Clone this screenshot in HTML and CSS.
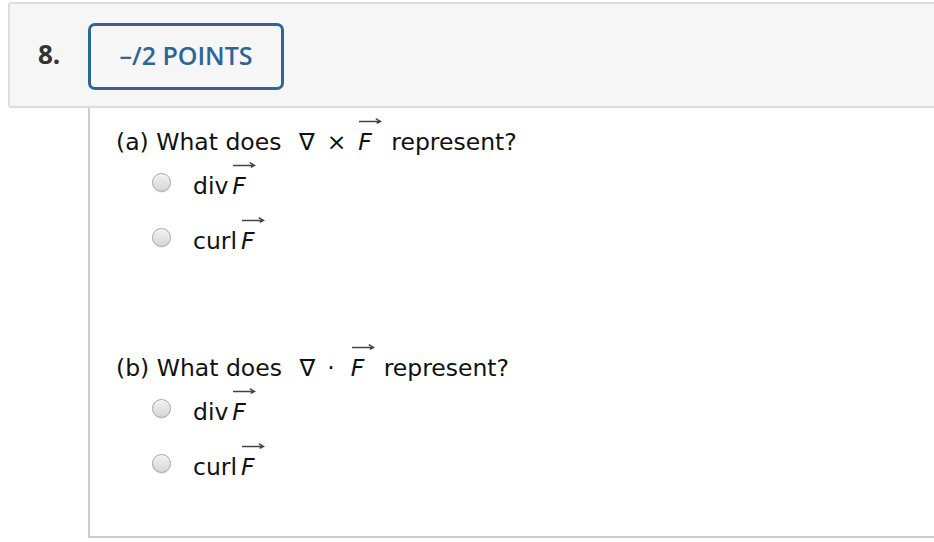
FILE: index.html
```html
<!DOCTYPE html>
<html lang="en">
<head>
<meta charset="utf-8">
<title>Question 8</title>
<link rel="stylesheet" href="styles.css">
</head>
<body>
<section class="question">
  <header class="qhead">
    <span class="qnum">8.</span>
    <span class="points">–/2 POINTS</span>
  </header>
  <div class="qbody">
    <div class="part">
      <p class="prompt">(a) What does <span class="math"><span class="op">∇</span><span class="op">×</span><span class="vec">F<svg class="arrow" viewBox="0 0 24 8" aria-hidden="true"><path d="M0 4.5H22.5M17.5 1.5L22.5 4.5L18.5 6.5"/></svg></span></span> represent?</p>
      <ul class="choices">
        <li class="choice"><span class="radio"></span><span class="label">div<span class="vec">F<svg class="arrow" viewBox="0 0 24 8" aria-hidden="true"><path d="M0 4.5H22.5M17.5 1.5L22.5 4.5L18.5 6.5"/></svg></span></span></li>
        <li class="choice"><span class="radio"></span><span class="label">curl<span class="vec">F<svg class="arrow" viewBox="0 0 24 8" aria-hidden="true"><path d="M0 4.5H22.5M17.5 1.5L22.5 4.5L18.5 6.5"/></svg></span></span></li>
      </ul>
    </div>
    <div class="part part-b">
      <p class="prompt">(b) What does <span class="math"><span class="op">∇</span><span class="op dot">·</span><span class="vec">F<svg class="arrow" viewBox="0 0 24 8" aria-hidden="true"><path d="M0 4.5H22.5M17.5 1.5L22.5 4.5L18.5 6.5"/></svg></span></span> represent?</p>
      <ul class="choices">
        <li class="choice"><span class="radio"></span><span class="label">div<span class="vec">F<svg class="arrow" viewBox="0 0 24 8" aria-hidden="true"><path d="M0 4.5H22.5M17.5 1.5L22.5 4.5L18.5 6.5"/></svg></span></span></li>
        <li class="choice"><span class="radio"></span><span class="label">curl<span class="vec">F<svg class="arrow" viewBox="0 0 24 8" aria-hidden="true"><path d="M0 4.5H22.5M17.5 1.5L22.5 4.5L18.5 6.5"/></svg></span></span></li>
      </ul>
    </div>
  </div>
</section>
</body>
</html>
```

FILE: styles.css
```css
html, body {
  margin: 0;
  padding: 0;
  background: #ffffff;
  overflow: hidden;
}

body {
  width: 934px;
  height: 542px;
}

.question {
  padding-top: 2px;
  margin-right: -40px;
}

.qhead {
  display: flex;
  align-items: flex-start;
  margin-left: 8px;
  padding: 19px 0 16px 28px;
  background: #f6f6f6;
  border: 2px solid #dcdcdc;
  border-radius: 3px;
}

.qnum {
  width: 50px;
  margin-top: 16px;
  font-family: "Open Sans", "Liberation Sans", sans-serif;
  font-weight: 700;
  font-size: 26px;
  line-height: 30px;
  color: #333333;
}

.points {
  box-sizing: border-box;
  width: 196px;
  height: 67px;
  padding-bottom: 4px;
  display: flex;
  align-items: center;
  justify-content: center;
  border: 3px solid #2d6596;
  border-radius: 7px;
  font-family: "Open Sans", "Liberation Sans", sans-serif;
  font-weight: 600;
  font-size: 25px;
  color: #2d6596;
}

.qbody {
  box-sizing: border-box;
  margin-left: 88px;
  height: 430px;
  border-left: 2px solid #cccccc;
  border-bottom: 2px solid #cccccc;
  padding: 20px 0 0 26px;
  font-family: "DejaVu Sans", Verdana, sans-serif;
  font-size: 23.5px;
  line-height: 28px;
  color: #111111;
}

.part-b {
  margin-top: 99px;
}

.prompt {
  margin: 0;
}

.math {
  margin: 0 12px 0 10px;
}

.op {
  margin-right: 12px;
}

.op.dot {
  margin-right: 16px;
}

.vec {
  position: relative;
  font-style: italic;
}

.arrow {
  position: absolute;
  left: 1px;
  top: -11px;
  width: 23px;
  height: 8px;
  fill: none;
  stroke: #444444;
  stroke-width: 1.5;
}

.choices {
  list-style: none;
  margin: 16px 0 0 36px;
  padding: 0;
  display: flex;
  flex-direction: column;
  gap: 27px;
}

.choice {
  display: flex;
  align-items: flex-start;
}

.radio {
  box-sizing: border-box;
  width: 19px;
  height: 19px;
  margin-top: 1px;
  margin-right: 22px;
  border-radius: 50%;
  border: 1px solid #a4a4a4;
  background: linear-gradient(#f2f2f2, #d6d6d6);
  box-shadow: inset 0 1px 1px rgba(255, 255, 255, 0.8), 0 1px 1px rgba(0, 0, 0, 0.08);
}

.label .vec {
  margin-left: 4px;
}
```
